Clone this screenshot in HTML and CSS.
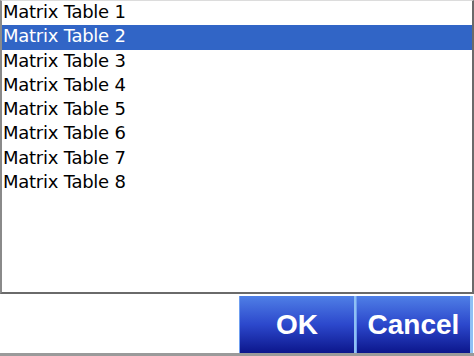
FILE: index.html
```html
<!DOCTYPE html>
<html lang="en">
<head>
    <meta charset="UTF-8">
    <title>Matrix Tables</title>
    <link rel="stylesheet" href="styles.css">
</head>
<body>
    <div class="dialog">
        <ul class="list">
            <li>Matrix Table 1</li>
            <li class="selected">Matrix Table 2</li>
            <li>Matrix Table 3</li>
            <li>Matrix Table 4</li>
            <li>Matrix Table 5</li>
            <li>Matrix Table 6</li>
            <li>Matrix Table 7</li>
            <li>Matrix Table 8</li>
        </ul>
        <div class="buttons">
            <button class="btn">OK</button>
            <button class="btn">Cancel</button>
        </div>
        <div class="bottom-strip"></div>
    </div>
</body>
</html>
```

FILE: styles.css
```css
body {
    margin: 0;
    width: 474px;
    height: 356px;
    background: white;
    overflow: hidden;
}
.dialog {
    display: flex;
    flex-direction: column;
    height: 356px;
}
.list {
    list-style: none;
    margin: 0;
    padding: 0;
    height: 291px;
    border-top: 1px solid #dcdcdc;
    border-left: 2px solid #8a8a8a;
    border-right: 2px solid #6a6a6a;
    border-bottom: 2px solid #6a6a6a;
    font-family: "DejaVu Sans", Verdana, sans-serif;
    font-size: 18px;
    letter-spacing: -0.25px;
    color: black;
}
.list li {
    height: 24.3px;
    line-height: 22px;
    padding-left: 1px;
}
.list li.selected {
    background: #3165c6;
    color: white;
}
.buttons {
    display: flex;
    justify-content: flex-end;
    height: 57px;
    margin-top: 2px;
}
.btn {
    width: 117px;
    height: 57px;
    margin: 0;
    border: none;
    border-left: 1px solid #6f9ef0;
    border-right: 2px solid #8ec0f4;
    background: linear-gradient(#4f7fe6, #2c48cc 50%, #0c168c);
    color: white;
    font-family: "Liberation Sans", Arial, sans-serif;
    font-weight: bold;
    font-size: 28px;
    padding: 0;
}
.btn:last-child {
    border-right: 3px solid #8ec0f4;
    margin-right: 1px;
}
.bottom-strip {
    height: 3px;
    background: #9a9a9a;
}
```
